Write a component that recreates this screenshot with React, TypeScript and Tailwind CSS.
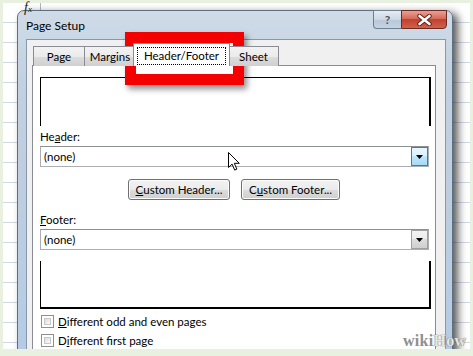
import React from 'react';

const ui = { fontFamily: 'Lato, "Noto Sans", Arial, sans-serif' };

function DropButton({ hot }: { hot?: boolean }) {
  return (
    <div
      className={
        hot
          ? 'w-[17px] h-full border border-[#3c7fb1] bg-[linear-gradient(to_bottom,#eaf6fd_0%,#d9f0fc_50%,#bee6fd_50%,#a7d9f5_100%)] flex items-center justify-center'
          : 'w-[17px] h-full border border-[#a0a0a0] bg-[linear-gradient(to_bottom,#f2f2f2_0%,#ebebeb_50%,#dddddd_50%,#cfcfcf_100%)] flex items-center justify-center'
      }
    >
      <svg width="7" height="4" viewBox="0 0 7 4">
        <path d="M0 0h7L3.5 4z" fill="#000" />
      </svg>
    </div>
  );
}

function Combo({ hot }: { hot?: boolean }) {
  return (
    <div className="w-[389px] h-[21px] border border-[#abadb3] border-t-[#8e8f8f] bg-white flex items-stretch">
      <div className="flex-1 pl-[3px] text-[11.5px] leading-[19px] text-black">(none)</div>
      <DropButton hot={hot} />
    </div>
  );
}

function PushButton({ children, w }: { children: React.ReactNode; w: string }) {
  return (
    <div
      className={`${w} h-[21px] rounded-[3px] border border-[#707070] bg-[linear-gradient(to_bottom,#f2f2f2_0%,#ebebeb_50%,#dddddd_50%,#cfcfcf_100%)] shadow-[inset_0_0_0_1px_#fcfcfc] flex items-center justify-center text-[11.5px] text-black`}
    >
      {children}
    </div>
  );
}

function Check({ children }: { children: React.ReactNode }) {
  return (
    <div className="h-[19px] flex items-center gap-[4px] pl-[1px]">
      <div className="w-[13px] h-[13px] border border-[#8e8f8f] bg-white p-[2px]">
        <div className="w-full h-full bg-[linear-gradient(135deg,#dcdcdc,#fbfbfb)] border border-[#c8c8c8]" />
      </div>
      <span className="text-[11.5px] text-black">{children}</span>
    </div>
  );
}

const tabBg =
  'bg-[linear-gradient(to_bottom,#f2f2f2_0%,#ebebeb_50%,#dddddd_50%,#cfcfcf_100%)]';

export default function App() {
  return (
    <div className="relative w-[473px] h-[356px] bg-[#e8f1df] pt-[3px] px-[3px] pb-[7px]" style={ui}>
      {/* Excel sheet behind the dialog */}
      <div className="relative h-full overflow-hidden bg-white bg-[repeating-linear-gradient(to_bottom,transparent_0px,transparent_19px,#d0d7e5_19px,#d0d7e5_20px)]">
        <div className="absolute left-[37px] top-0 w-px h-[8px] bg-[#b0b8c4]" />

        {/* Page Setup dialog */}
        <div className="absolute left-[14px] top-[7px] w-[436px] h-[360px] rounded-t-[7px] border border-[#5f6f80] bg-[linear-gradient(to_bottom,#cfdbe7_0%,#c2d1e0_20%,#bccde0_60%,#b4cbe6_100%)] shadow-[5px_3px_8px_rgba(0,0,0,0.65)] flex flex-col">
          {/* Title bar */}
          <div className="h-[28px] flex items-start justify-between">
            <div className="pl-[8px] pt-[7px] text-[12px] leading-[16px] text-black">Page Setup</div>
            <div className="flex mr-[5px] -mt-px">
              <div className="w-[28px] h-[19px] rounded-bl-[4px] border border-[#707f8f] border-r-0 bg-[linear-gradient(to_bottom,#e4ebf3_0%,#cdd8e4_50%,#b8c7d8_50%,#c5d3e2_100%)] flex items-center justify-center text-[12px] font-bold text-[#4a5866]">
                ?
              </div>
              <div className="w-[46px] h-[19px] rounded-br-[4px] border border-[#6b2a24] bg-[linear-gradient(to_bottom,#e8a093_0%,#d66a59_45%,#c2412f_50%,#d0614b_100%)] flex items-center justify-center">
                <svg width="15" height="12" viewBox="0 0 15 12">
                  <path d="M2.5 2l10 8M12.5 2l-10 8" stroke="#5a1a14" strokeWidth="4.4" strokeLinecap="round" />
                  <path d="M2.5 2l10 8M12.5 2l-10 8" stroke="#fff" strokeWidth="2.6" strokeLinecap="round" />
                </svg>
              </div>
            </div>
          </div>

          {/* Client area */}
          <div className="flex-1 ml-[8px] mr-[6px] border border-b-0 border-[#8798aa] bg-[#f0f0f0] pl-[5px] pt-[3px]">
            {/* Tabs */}
            <div className="relative z-10 h-[23px] flex items-end pl-[1px] -mb-px">
              <div className={`w-[52px] h-[20px] border border-b-0 border-[#898c95] ${tabBg} flex items-center justify-center text-[11.5px] text-black`}>
                Page
              </div>
              <div className={`w-[52px] h-[20px] -ml-px border border-b-0 border-[#898c95] ${tabBg} flex items-center justify-center text-[11.5px] text-black`}>
                Margins
              </div>
              <div className="relative z-10 w-[97px] h-[23px] -ml-[3px] border border-b-0 border-[#898c95] bg-white flex items-start justify-center pt-[3px]">
                <div className="h-[18px] px-[6px] border border-dotted border-black text-[11.5px] leading-[16px] text-black">
                  Header/Footer
                </div>
              </div>
              <div className={`w-[50px] h-[20px] -ml-px border border-b-0 border-l-0 border-[#898c95] ${tabBg} flex items-center justify-center text-[11.5px] text-black`}>
                Sheet
              </div>
            </div>

            {/* Tab page */}
            <div className="w-[404px] h-[300px] border border-[#898c95] bg-white pl-[7px] pt-[11px]">
              <div className="w-[391px] h-[49px] border-t border-l border-r-2 border-black" />
              <div className="mt-[3px] text-[11.5px] leading-[16px] text-black">
                He<span className="underline">a</span>der:
              </div>
              <div className="mt-[1px]">
                <Combo hot />
              </div>
              <div className="mt-[12px] pl-[88px] flex gap-[11px]">
                <PushButton w="w-[102px]">
                  <span className="underline">C</span>ustom Header...
                </PushButton>
                <PushButton w="w-[99px]">
                  C<span className="underline">u</span>stom Footer...
                </PushButton>
              </div>
              <div className="mt-[12px] text-[11.5px] leading-[16px] text-black">
                <span className="underline">F</span>ooter:
              </div>
              <div className="mt-[1px]">
                <Combo />
              </div>
              <div className="mt-[11px] w-[391px] h-[48px] border-l border-r-2 border-b-2 border-black" />
              <div className="mt-[3px]">
                <Check>
                  <span className="underline">D</span>ifferent odd and even pages
                </Check>
                <Check>
                  D<span className="underline">i</span>fferent first page
                </Check>
              </div>
            </div>
          </div>
        </div>

        {/* Red highlight around the Header/Footer tab */}
        <div className="absolute left-[122px] top-[29px] w-[119px] h-[53px] border-[11px] border-[#f50000] shadow-[3px_4px_6px_rgba(0,0,0,0.45)]" />

        {/* Mouse pointer */}
        <svg className="absolute left-[225px] top-[149px]" width="12" height="19" viewBox="0 0 12 19">
          <path d="M0.5 0.5v15l3.6-3.4 2.6 6 2.2-1-2.6-5.8h5z" fill="#fff" stroke="#000" strokeWidth="1" strokeLinejoin="round" />
        </svg>
      </div>

      {/* formula bar fx, drawn over the sheet edge */}
      <div
        className="absolute left-[24px] top-[2px] text-[14px] leading-[11px] italic text-[#222]"
        style={{ fontFamily: '"Liberation Serif", serif' }}
      >
        f<span className="text-[9px]">x</span>
      </div>

      {/* watermark */}
      <div
        className="absolute left-[403px] top-[333px] text-[16px] font-bold leading-[15px] tracking-[0.3px]"
        style={{ fontFamily: '"Liberation Serif", serif' }}
      >
        <span className="text-[#8f8f8f]">wiki</span>
        <span className="text-[#e4e8e0] [text-shadow:0_0_1px_#6f6f6f,0_0_1px_#6f6f6f]">How</span>
      </div>
    </div>
  );
}
